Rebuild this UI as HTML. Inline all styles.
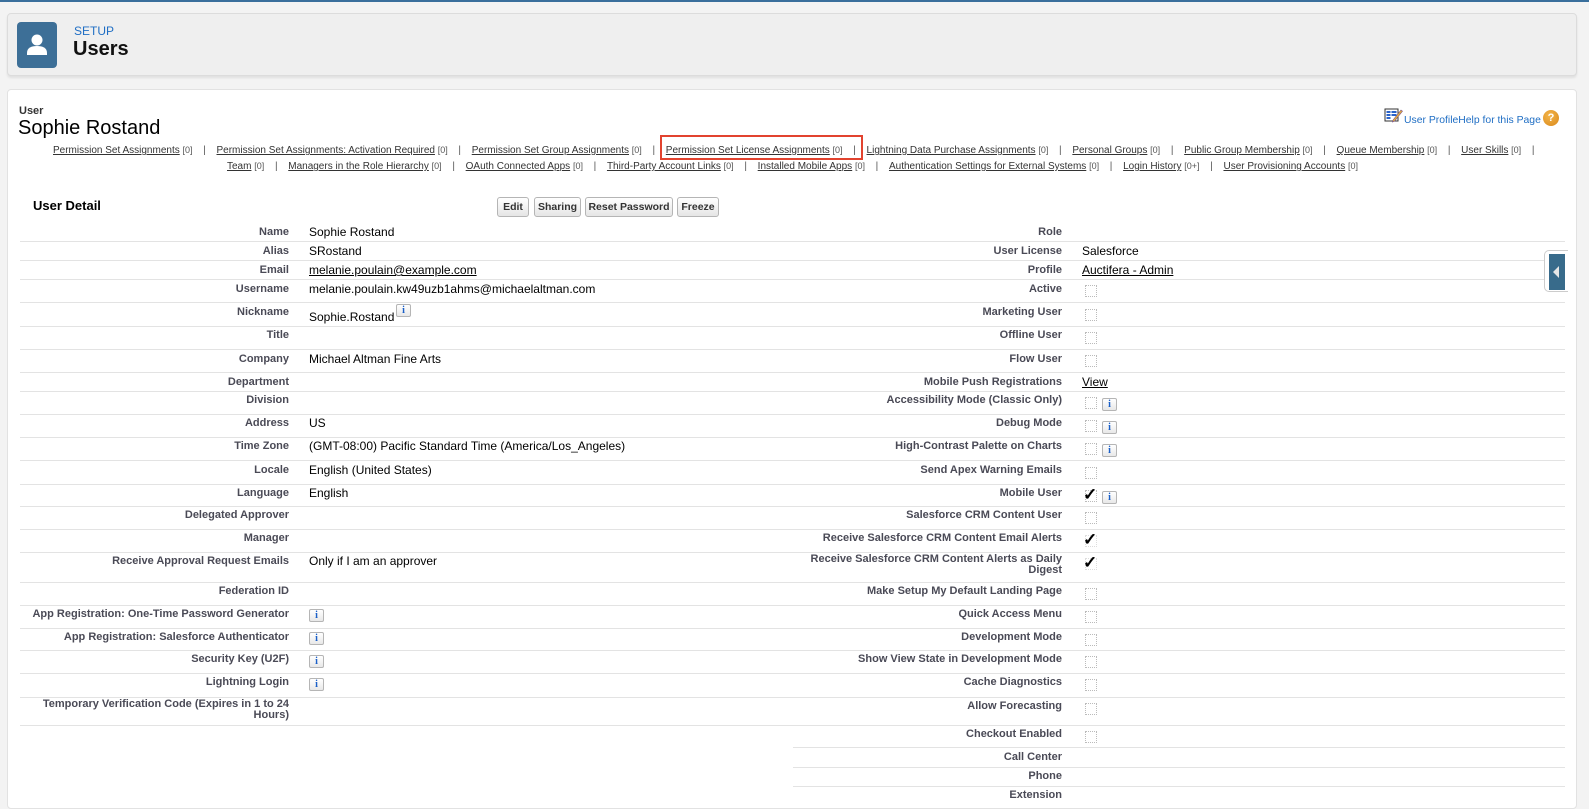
<!DOCTYPE html>
<html><head><meta charset="utf-8">
<style>
*{margin:0;padding:0;box-sizing:border-box}
body{width:1589px;height:805px;overflow:hidden;background:#f3f3f3;font-family:"Liberation Sans",Arial,sans-serif;position:relative}
.a{position:absolute}
.top{left:0;top:0;width:1589px;height:2px;background:#3a6f9c}
.hdr{left:7px;top:13px;width:1570px;height:63px;background:#efefef;border:1px solid #dcdcdc;border-radius:4px;box-shadow:0 2px 2px rgba(0,0,0,.08)}
.card{left:7px;top:89px;width:1570px;height:720px;background:#fff;border:1px solid #e2e2e2;border-radius:4px}
.l{left:20px;width:269px;text-align:right;font-weight:bold;font-size:11px;line-height:14px;color:#4a4a56}
.rl{left:780px;width:282px;text-align:right;font-weight:bold;font-size:11px;line-height:14px;color:#4a4a56}
.v{left:309px;font-size:12px;line-height:14px;color:#000}
.rv{left:1082px;font-size:12px;line-height:14px;color:#000}
.ln{height:1px;background:#e3e3e3}
.cb{left:1085px;width:12px;height:12px;border:1px dotted #bbb}
.ck{left:1083px;font-size:17px;line-height:16px;font-weight:bold;color:#000}
.i{width:15px;height:13px;border:1px solid #b5b5b5;border-radius:2px;background:linear-gradient(#fff,#e8e8e8);font:bold 10px "Liberation Serif",serif;color:#1a5fc8;text-align:center;line-height:11px}
.lk{font-size:10px;line-height:12px;color:#333;white-space:nowrap}
.lk u{color:#333}
.lk s{text-decoration:none;color:#555;font-size:9px}
.lk b{font-weight:normal;color:#555;margin:0 10.7px}
.btn{height:20px;border:1px solid #b5b5b5;border-radius:3px;background:linear-gradient(#fff,#e5e5e5);font-weight:bold;font-size:10.5px;line-height:18px;text-align:center;color:#333}
</style></head><body>
<div class="a top"></div>
<div class="a hdr"></div>
<div class="a" style="left:17px;top:22px;width:40px;height:46px;background:#3d6f97;border-radius:4px">
<svg width="40" height="46" viewBox="0 0 40 46"><circle cx="20" cy="18" r="5.5" fill="#fff"/><path d="M10 31c0-5 4-7 10-7s10 2 10 7v2H10z" fill="#fff"/></svg></div>
<div class="a" style="left:74px;top:24px;font-size:12px;color:#1f6ec4">SETUP</div>
<div class="a" style="left:73px;top:38px;font-size:20px;font-weight:bold;color:#111">Users</div>
<div class="a card"></div>
<div class="a" style="left:19px;top:105px;font-size:11px;font-weight:bold;color:#333">User</div>
<div class="a" style="left:18px;top:117px;font-size:20px;color:#000">Sophie Rostand</div>
<svg class="a" style="left:1384px;top:107px" width="19" height="17" viewBox="0 0 19 17"><rect x="1" y="2" width="13" height="12" fill="#fff" stroke="#333" stroke-width="1"/><rect x="2.5" y="4" width="4" height="2" fill="#2a62c9"/><rect x="7.5" y="4" width="5" height="2" fill="#2a62c9"/><rect x="2.5" y="7" width="4" height="2" fill="#2a62c9"/><rect x="7.5" y="7" width="5" height="2" fill="#2a62c9"/><rect x="2.5" y="10" width="4" height="2" fill="#2a62c9"/><path d="M9 13l8-10 1.5 1.2-8 10-2 .8z" fill="#e5b13a" stroke="#7a4f8a" stroke-width=".6"/></svg>
<div class="a" style="left:1404px;top:115px;font-size:10.4px;color:#1f6ec4;width:136px;white-space:nowrap">User ProfileHelp for this Page</div>
<div class="a" style="left:1543px;top:110px;width:16px;height:16px;border-radius:50%;background:radial-gradient(circle at 40% 35%,#f3b54a,#d9881a);color:#fff;font-size:11px;font-weight:bold;text-align:center;line-height:16px">?</div>

<div class="a lk" style="left:53px;top:144px"><u>Permission Set Assignments</u> <s>[0]</s><b>|</b><u>Permission Set Assignments: Activation Required</u> <s>[0]</s><b>|</b><u>Permission Set Group Assignments</u> <s>[0]</s><b>|</b><u>Permission Set License Assignments</u> <s>[0]</s><b>|</b><u>Lightning Data Purchase Assignments</u> <s>[0]</s><b>|</b><u>Personal Groups</u> <s>[0]</s><b>|</b><u>Public Group Membership</u> <s>[0]</s><b>|</b><u>Queue Membership</u> <s>[0]</s><b>|</b><u>User Skills</u> <s>[0]</s><b>|</b></div>
<div class="a lk" style="left:227px;top:160px"><u>Team</u> <s>[0]</s><b>|</b><u>Managers in the Role Hierarchy</u> <s>[0]</s><b>|</b><u>OAuth Connected Apps</u> <s>[0]</s><b>|</b><u>Third-Party Account Links</u> <s>[0]</s><b>|</b><u>Installed Mobile Apps</u> <s>[0]</s><b>|</b><u>Authentication Settings for External Systems</u> <s>[0]</s><b>|</b><u>Login History</u> <s>[0+]</s><b>|</b><u>User Provisioning Accounts</u> <s>[0]</s></div>
<div class="a" style="left:660px;top:135px;width:203px;height:25px;border:2px solid #e2432f"></div>

<div class="a" style="left:33px;top:198px;font-size:13px;font-weight:bold;color:#000">User Detail</div>
<div class="a btn" style="left:497px;top:197px;width:32px">Edit</div>
<div class="a btn" style="left:534px;top:197px;width:47px">Sharing</div>
<div class="a btn" style="left:585px;top:197px;width:88px">Reset Password</div>
<div class="a btn" style="left:677px;top:197px;width:42px">Freeze</div>

<div class="a ln" style="left:20px;width:1545px;top:241px"></div>
<div class="a ln" style="left:20px;width:1545px;top:260px"></div>
<div class="a ln" style="left:20px;width:1545px;top:279px"></div>
<div class="a ln" style="left:20px;width:1545px;top:302px"></div>
<div class="a ln" style="left:20px;width:1545px;top:326px"></div>
<div class="a ln" style="left:20px;width:1545px;top:349px"></div>
<div class="a ln" style="left:20px;width:1545px;top:372px"></div>
<div class="a ln" style="left:20px;width:1545px;top:391px"></div>
<div class="a ln" style="left:20px;width:1545px;top:414px"></div>
<div class="a ln" style="left:20px;width:1545px;top:437px"></div>
<div class="a ln" style="left:20px;width:1545px;top:460px"></div>
<div class="a ln" style="left:20px;width:1545px;top:484px"></div>
<div class="a ln" style="left:20px;width:1545px;top:506px"></div>
<div class="a ln" style="left:20px;width:1545px;top:529px"></div>
<div class="a ln" style="left:20px;width:1545px;top:552px"></div>
<div class="a ln" style="left:20px;width:1545px;top:582px"></div>
<div class="a ln" style="left:20px;width:1545px;top:605px"></div>
<div class="a ln" style="left:20px;width:1545px;top:628px"></div>
<div class="a ln" style="left:20px;width:1545px;top:650px"></div>
<div class="a ln" style="left:20px;width:1545px;top:673px"></div>
<div class="a ln" style="left:20px;width:1545px;top:697px"></div>
<div class="a ln" style="left:20px;width:1545px;top:725px"></div>
<div class="a ln" style="left:793px;width:772px;top:747px"></div>
<div class="a ln" style="left:793px;width:772px;top:767px"></div>
<div class="a ln" style="left:793px;width:772px;top:786px"></div>

<div class="a l" style="top:225px">Name</div><div class="a v" style="top:225px">Sophie Rostand</div>
<div class="a l" style="top:244px">Alias</div><div class="a v" style="top:244px">SRostand</div>
<div class="a l" style="top:263px">Email</div><div class="a v" style="top:263px;text-decoration:underline">melanie.poulain@example.com</div>
<div class="a l" style="top:282px">Username</div><div class="a v" style="top:282px">melanie.poulain.kw49uzb1ahms@michaelaltman.com</div>
<div class="a l" style="top:305px">Nickname</div><div class="a v" style="top:310px">Sophie.Rostand</div><div class="a i" style="left:396px;top:304px">i</div>
<div class="a l" style="top:328px">Title</div>
<div class="a l" style="top:352px">Company</div><div class="a v" style="top:352px">Michael Altman Fine Arts</div>
<div class="a l" style="top:375px">Department</div>
<div class="a l" style="top:393px">Division</div>
<div class="a l" style="top:416px">Address</div><div class="a v" style="top:416px">US</div>
<div class="a l" style="top:439px">Time Zone</div><div class="a v" style="top:439px">(GMT-08:00) Pacific Standard Time (America/Los_Angeles)</div>
<div class="a l" style="top:463px">Locale</div><div class="a v" style="top:463px">English (United States)</div>
<div class="a l" style="top:486px">Language</div><div class="a v" style="top:486px">English</div>
<div class="a l" style="top:508px">Delegated Approver</div>
<div class="a l" style="top:531px">Manager</div>
<div class="a l" style="top:554px">Receive Approval Request Emails</div><div class="a v" style="top:554px">Only if I am an approver</div>
<div class="a l" style="top:584px">Federation ID</div>
<div class="a l" style="top:607px">App Registration: One-Time Password Generator</div><div class="a i" style="left:309px;top:609px">i</div>
<div class="a l" style="top:630px">App Registration: Salesforce Authenticator</div><div class="a i" style="left:309px;top:632px">i</div>
<div class="a l" style="top:652px">Security Key (U2F)</div><div class="a i" style="left:309px;top:655px">i</div>
<div class="a l" style="top:675px">Lightning Login</div><div class="a i" style="left:309px;top:678px">i</div>
<div class="a l" style="top:699px;line-height:11px">Temporary Verification Code (Expires in 1 to 24<br>Hours)</div>

<div class="a rl" style="top:225px">Role</div>
<div class="a rl" style="top:244px">User License</div><div class="a rv" style="top:244px">Salesforce</div>
<div class="a rl" style="top:263px">Profile</div><div class="a rv" style="top:263px;text-decoration:underline">Auctifera - Admin</div>
<div class="a rl" style="top:282px">Active</div><div class="a cb" style="top:285px"></div>
<div class="a rl" style="top:305px">Marketing User</div><div class="a cb" style="top:309px"></div>
<div class="a rl" style="top:328px">Offline User</div><div class="a cb" style="top:332px"></div>
<div class="a rl" style="top:352px">Flow User</div><div class="a cb" style="top:355px"></div>
<div class="a rl" style="top:375px">Mobile Push Registrations</div><div class="a rv" style="top:375px;text-decoration:underline">View</div>
<div class="a rl" style="top:393px">Accessibility Mode (Classic Only)</div><div class="a cb" style="top:397px"></div><div class="a i" style="left:1102px;top:398px">i</div>
<div class="a rl" style="top:416px">Debug Mode</div><div class="a cb" style="top:420px"></div><div class="a i" style="left:1102px;top:421px">i</div>
<div class="a rl" style="top:439px">High-Contrast Palette on Charts</div><div class="a cb" style="top:443px"></div><div class="a i" style="left:1102px;top:444px">i</div>
<div class="a rl" style="top:463px">Send Apex Warning Emails</div><div class="a cb" style="top:467px"></div>
<div class="a rl" style="top:486px">Mobile User</div><div class="a cb" style="top:490px"></div><div class="a ck" style="top:487px">✓</div><div class="a i" style="left:1102px;top:491px">i</div>
<div class="a rl" style="top:508px">Salesforce CRM Content User</div><div class="a cb" style="top:512px"></div>
<div class="a rl" style="top:531px">Receive Salesforce CRM Content Email Alerts</div><div class="a cb" style="top:535px;border-color:#ddd"></div><div class="a ck" style="top:532px">✓</div>
<div class="a rl" style="top:554px;line-height:11px">Receive Salesforce CRM Content Alerts as Daily<br>Digest</div><div class="a cb" style="top:558px;border-color:#ddd"></div><div class="a ck" style="top:555px">✓</div>
<div class="a rl" style="top:584px">Make Setup My Default Landing Page</div><div class="a cb" style="top:588px"></div>
<div class="a rl" style="top:607px">Quick Access Menu</div><div class="a cb" style="top:611px"></div>
<div class="a rl" style="top:630px">Development Mode</div><div class="a cb" style="top:634px"></div>
<div class="a rl" style="top:652px">Show View State in Development Mode</div><div class="a cb" style="top:656px"></div>
<div class="a rl" style="top:675px">Cache Diagnostics</div><div class="a cb" style="top:679px"></div>
<div class="a rl" style="top:699px">Allow Forecasting</div><div class="a cb" style="top:703px"></div>
<div class="a rl" style="top:727px">Checkout Enabled</div><div class="a cb" style="top:731px"></div>
<div class="a rl" style="top:750px">Call Center</div>
<div class="a rl" style="top:769px">Phone</div>
<div class="a rl" style="top:788px">Extension</div>

<div class="a" style="left:1544px;top:250px;width:24px;height:42px;background:#fff;border:1px solid #ccc;border-right:none;border-radius:5px 0 0 5px"></div>
<div class="a" style="left:1549px;top:254px;width:16px;height:36px;background:#386b8b"></div>
<svg class="a" style="left:1552px;top:265px" width="8" height="14" viewBox="0 0 8 14"><path d="M7 1L1 7l6 6z" fill="#e6e6e6"/></svg>
</body></html>
